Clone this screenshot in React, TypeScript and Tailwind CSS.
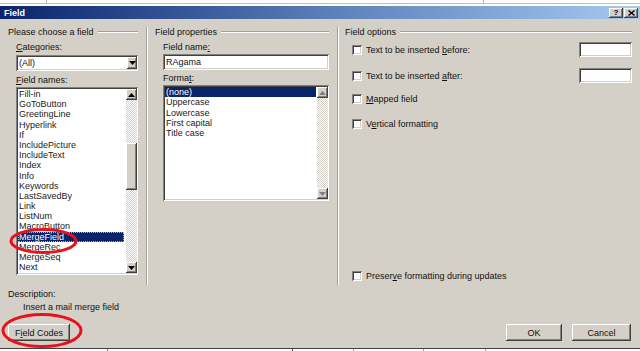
import React from 'react';

const sunken =
  'bg-white shadow-[inset_1px_1px_0_#808080,inset_-1px_-1px_0_#ffffff,inset_2px_2px_0_#404040,inset_-2px_-2px_0_#d4d0c8]';
const raised =
  'bg-[#d4d0c8] shadow-[inset_-1px_-1px_0_#404040,inset_1px_1px_0_#ffffff,inset_-2px_-2px_0_#808080,inset_2px_2px_0_#d4d0c8]';
const track =
  'bg-[image:repeating-conic-gradient(#d4d0c8_0_25%,#ffffff_0_50%)] bg-[length:2px_2px]';

const fieldNames = [
  'Fill-in',
  'GoToButton',
  'GreetingLine',
  'Hyperlink',
  'If',
  'IncludePicture',
  'IncludeText',
  'Index',
  'Info',
  'Keywords',
  'LastSavedBy',
  'Link',
  'ListNum',
  'MacroButton',
  'MergeField',
  'MergeRec',
  'MergeSeq',
  'Next',
];

const formats = ['(none)', 'Uppercase', 'Lowercase', 'First capital', 'Title case'];

const Arrow = ({ dir, disabled }: { dir: 'up' | 'down'; disabled?: boolean }) => (
  <svg width="7" height="4" viewBox="0 0 7 4">
    <polygon
      points={dir === 'up' ? '3.5,0 7,4 0,4' : '0,0 7,0 3.5,4'}
      fill={disabled ? '#808080' : '#000000'}
    />
  </svg>
);

const ScrollButton = ({ dir, disabled }: { dir: 'up' | 'down'; disabled?: boolean }) => (
  <div className={`w-[11px] h-[11px] shrink-0 flex items-center justify-center ${raised}`}>
    <Arrow dir={dir} disabled={disabled} />
  </div>
);

const GroupHeading = ({ title }: { title: string }) => (
  <div className="flex items-center h-[10px]">
    <span className="whitespace-nowrap">{title}</span>
    <div className="flex-1 ml-[4px] h-[2px] border-t border-[#a0a0a0] border-b border-b-white" />
  </div>
);

const Checkbox = () => <div className={`w-[10px] h-[10px] shrink-0 ${sunken}`} />;

const Button = ({ children, className }: { children: React.ReactNode; className: string }) => (
  <div className={`h-[17px] flex items-center justify-center ${raised} ${className}`}>{children}</div>
);

const App: React.FC = () => {
  return (
    <div className="w-[640px] h-[351px] bg-white relative overflow-hidden font-['Liberation_Sans',Arial,sans-serif] text-[9px] leading-[10px] text-[#111]">
      {/* document behind */}
      <div className="h-[6px] flex flex-col">
        <div className="h-[3px] flex">
          <div className="w-[47px] border-r border-[#b0b0b0]" />
          <div className="w-[437px] border-r border-[#b0b0b0]" />
        </div>
        <div className="h-px bg-[#c0c0c0]" />
      </div>

      {/* dialog */}
      <div className="h-[343px] bg-[#d4d0c8] border-b border-[#404040] flex flex-col">
        {/* title bar */}
        <div className="h-[13px] bg-gradient-to-r from-[#0a246a] via-[#5a7db8] to-[#a6caf0] flex items-center pl-[4px] pr-[2px]">
          <span className="text-white font-bold text-[9px]">Field</span>
          <div className="ml-auto flex gap-px">
            <div className={`w-[14px] h-[10px] flex items-center justify-center ${raised}`}>
              <span className="font-bold text-[8px] leading-[8px] text-black">?</span>
            </div>
            <div className={`w-[14px] h-[10px] flex items-center justify-center ${raised}`}>
              <svg width="7" height="6" viewBox="0 0 7 6">
                <path d="M0.5 0.5 L6.5 5.5 M6.5 0.5 L0.5 5.5" stroke="#000" strokeWidth="1.4" />
              </svg>
            </div>
          </div>
        </div>

        {/* body */}
        <div className="flex-1 flex flex-col">
          <div className="mt-[8px] h-[258px] flex">
            {/* left column */}
            <div className="w-[146px] pl-[8px] pr-[8px] flex flex-col">
              <GroupHeading title="Please choose a field" />
              <div className="pl-[8px] flex flex-col">
                <div className="mt-[5px] h-[10px]">
                  <u>C</u>ategories:
                </div>
                <div className={`mt-[3px] h-[16px] flex items-center pl-[3px] pr-[1px] ${sunken}`}>
                  <span className="flex-1">(All)</span>
                  <div className={`w-[10px] h-[12px] flex items-center justify-center ${raised}`}>
                    <Arrow dir="down" />
                  </div>
                </div>
                <div className="mt-[4px] h-[10px]">
                  <u>F</u>ield names:
                </div>
                <div className={`mt-[2px] h-[188px] flex p-[2px] pr-[1px] ${sunken}`}>
                  <div className="flex-1 flex flex-col pr-[2px]">
                    {fieldNames.map((name) => (
                      <div
                        key={name}
                        className={`h-[10.2px] leading-[10.2px] pl-[1px] whitespace-nowrap ${
                          name === 'MergeField'
                            ? 'bg-[#0a246a] text-white outline-1 outline-dotted outline-[#c8b878] -outline-offset-1'
                            : 'text-[#1a1a1a]'
                        }`}
                      >
                        {name}
                      </div>
                    ))}
                  </div>
                  <div className="w-[11px] flex flex-col">
                    <ScrollButton dir="up" />
                    <div className={`h-[43px] ${track}`} />
                    <div className={`h-[47px] ${raised}`} />
                    <div className={`flex-1 ${track}`} />
                    <ScrollButton dir="down" />
                  </div>
                </div>
              </div>
            </div>

            <div className="w-[2px] border-l border-[#a0a0a0] border-r border-r-white" />

            {/* middle column */}
            <div className="w-[189px] pl-[7px] pr-[8px] flex flex-col">
              <GroupHeading title="Field properties" />
              <div className="pl-[8px] flex flex-col">
                <div className="mt-[5px] h-[10px]">
                  Field name<u>:</u>
                </div>
                <div className={`mt-[2px] h-[16px] flex items-center pl-[3px] ${sunken}`}>RAgama</div>
                <div className="mt-[3px] h-[10px]">
                  Forma<u>t</u>:
                </div>
                <div className={`mt-[2px] h-[116px] flex p-[2px] pr-[1px] ${sunken}`}>
                  <div className="flex-1 flex flex-col pr-[1px]">
                    {formats.map((f, i) => (
                      <div
                        key={f}
                        className={`h-[10.3px] leading-[10.3px] pl-[1px] whitespace-nowrap ${
                          i === 0 ? 'bg-[#0a246a] text-white' : 'text-[#1a1a1a]'
                        }`}
                      >
                        {f}
                      </div>
                    ))}
                  </div>
                  <div className="w-[11px] flex flex-col">
                    <ScrollButton dir="up" disabled />
                    <div className={`flex-1 ${track}`} />
                    <ScrollButton dir="down" disabled />
                  </div>
                </div>
              </div>
            </div>

            <div className="w-[2px] border-l border-[#a0a0a0] border-r border-r-white" />

            {/* right column */}
            <div className="flex-1 pl-[6px] pr-[8px] flex flex-col">
              <GroupHeading title="Field options" />
              <div className="ml-[7px] flex flex-col flex-1">
                <div className="mt-[5px] h-[15px] flex items-center">
                  <Checkbox />
                  <span className="ml-[4px]">
                    Text to be inserted <u>b</u>efore:
                  </span>
                  <div className={`ml-auto w-[53px] h-[15px] ${sunken}`} />
                </div>
                <div className="mt-[11px] h-[15px] flex items-center">
                  <Checkbox />
                  <span className="ml-[4px]">
                    Text to be inserted <u>a</u>fter:
                  </span>
                  <div className={`ml-auto w-[53px] h-[15px] ${sunken}`} />
                </div>
                <div className="mt-[8px] h-[15px] flex items-center">
                  <Checkbox />
                  <span className="ml-[4px]">
                    <u>M</u>apped field
                  </span>
                </div>
                <div className="mt-[10px] h-[15px] flex items-center">
                  <Checkbox />
                  <span className="ml-[4px]">
                    V<u>e</u>rtical formatting
                  </span>
                </div>
                <div className="mt-auto mb-[2px] h-[15px] flex items-center">
                  <Checkbox />
                  <span className="ml-[4px]">
                    Preser<u>v</u>e formatting during updates
                  </span>
                </div>
              </div>
            </div>
          </div>

          {/* description + buttons */}
          <div className="mt-[4px] h-[10px] pl-[8px]">Description:</div>
          <div className="mt-[3px] h-[10px] pl-[23px]">Insert a mail merge field</div>
          <div className="mt-[12px] flex pl-[8px] pr-[9px]">
            <Button className="w-[62px]">
              F<u>i</u>eld Codes
            </Button>
            <Button className="ml-auto w-[56px]">OK</Button>
            <Button className="ml-[10px] w-[59px]">Cancel</Button>
          </div>
        </div>
      </div>

      {/* document behind, bottom edge */}
      <div className="h-[2px] flex">
        <div className="w-[107px]" />
        <div className="w-px bg-[#808080]" />
        <div className="w-[184px]" />
        <div className="w-px bg-[#404040]" />
        <div className="w-[60px]" />
        <div className="w-px bg-[#a0a0a0]" />
        <div className="w-[69px]" />
        <div className="w-px bg-[#a0a0a0]" />
        <div className="w-[61px]" />
        <div className="w-px bg-[#a0a0a0]" />
      </div>

      {/* red annotation ellipses */}
      <svg className="absolute inset-0 pointer-events-none" width="640" height="351" viewBox="0 0 640 351">
        <ellipse cx="43.5" cy="241" rx="32.5" ry="11.5" fill="none" stroke="#e8121c" strokeWidth="3" />
        <ellipse cx="42" cy="330.5" rx="39" ry="16" fill="none" stroke="#e8121c" strokeWidth="3" />
      </svg>
    </div>
  );
};

export default App;
